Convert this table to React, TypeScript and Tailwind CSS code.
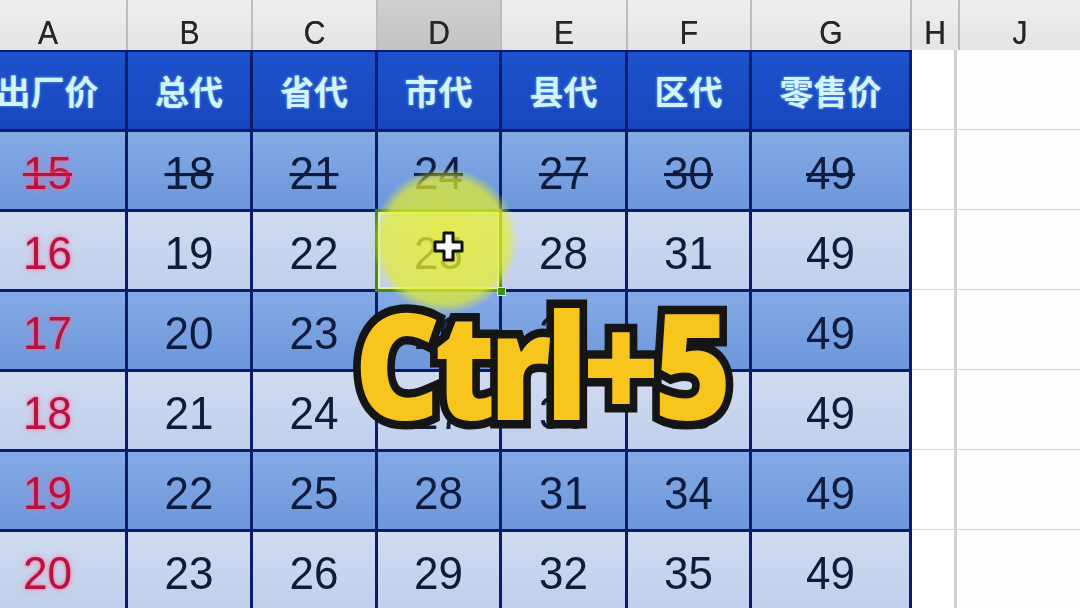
import React from "react";

const rows: number[][] = [
  [15, 18, 21, 24, 27, 30, 49],
  [16, 19, 22, 25, 28, 31, 49],
  [17, 20, 23, 26, 29, 32, 49],
  [18, 21, 24, 27, 30, 33, 49],
  [19, 22, 25, 28, 31, 34, 49],
  [20, 23, 26, 29, 32, 35, 49],
];

const headers = ["出厂价", "总代", "省代", "市代", "县代", "区代", "零售价"];
const letters = ["A", "B", "C", "D", "E", "F", "G", "H", "J"];

function Cursor() {
  return (
    <svg width="32" height="32" viewBox="0 0 32 32" className="absolute left-[433px] top-[231px] z-30">
      <path
        d="M11 2 H20 V11 H29 V20 H20 V29 H11 V20 H2 V11 H11 Z"
        fill="#ffffff"
        stroke="#111111"
        strokeWidth="3"
        strokeLinejoin="round"
      />
    </svg>
  );
}

export default function App() {
  return (
    <div className="relative w-[1080px] h-[608px] overflow-hidden bg-white [font-family:'Liberation_Sans',Arial,sans-serif]">
      {/* column letters */}
      <div className="ml-[-30px] grid grid-cols-[156px_123px_123px_122px_124px_122px_158px_46px_1fr] gap-x-[2px] bg-[#bdbdbd] h-[50px]">
        {letters.map((l, i) => (
          <div
            key={l}
            className={
              "flex items-center justify-center pt-[10px] text-[30px] text-[#262626] [text-shadow:0_0_0.6px_#262626] " +
              (i === 3
                ? "bg-gradient-to-b from-[#cfcfcf] to-[#c2c2c2]"
                : "bg-gradient-to-b from-[#eeeeee] to-[#e3e3e3]")
            }
          >
            <span className="scale-y-110 inline-block">{l}</span>
          </div>
        ))}
      </div>

      {/* table area */}
      <div className="ml-[-30px] flex">
        <div className="grid grid-cols-[155px_122px_122px_121px_123px_121px_157px] auto-rows-[77px] gap-[3px] bg-[#0b1c6c] pt-[2px] pr-[3px]">
          {headers.map((h) => (
            <div
              key={h}
              className="flex items-center justify-center bg-gradient-to-b from-[#1d52cc] to-[#1846bd] text-[34px] font-bold text-[#d2f4ff] [font-family:'Noto_Sans_CJK_SC',sans-serif] [text-shadow:0_0_3px_rgba(160,230,255,0.6)]"
            >
              {h}
            </div>
          ))}
          {rows.map((r, ri) =>
            r.map((v, ci) => {
              const dark = ri % 2 === 0;
              const selected = ri === 1 && ci === 3;
              const bg = dark
                ? "bg-gradient-to-b from-[#84aae6] to-[#6d97dc]"
                : "bg-gradient-to-b from-[#d0dbf1] to-[#c1cfeb]";
              const color =
                ci === 0
                  ? "text-[#b8123f] [text-shadow:0_0_3px_rgba(255,90,140,0.9),0_0_7px_rgba(255,120,160,0.5)]"
                  : "text-[#0f1b3d]";
              return (
                <div
                  key={ri + "-" + ci}
                  className={
                    "relative flex items-center justify-center pt-[5px] " +
                    bg +
                    (selected
                      ? " z-10 outline-[3px] outline-solid outline-[#3f8c20] shadow-[inset_0_0_0_2px_#eef7a8]"
                      : "")
                  }
                >
                  <span
                    className={
                      "inline-block scale-y-105 text-[44px] leading-none " +
                      color +
                      (ri === 0 ? " line-through decoration-[3px]" : "")
                    }
                  >
                    {v}
                  </span>
                  {selected && (
                    <div className="absolute right-[-7px] bottom-[-7px] w-[9px] h-[9px] bg-[#3f8c20] border border-[#d8f0b0]" />
                  )}
                </div>
              );
            })
          )}
        </div>

        {/* H / J columns */}
        <div className="flex-1 flex flex-col">
          {[0, 1, 2, 3, 4, 5, 6, 7].map((i) => (
            <div key={i} className="h-[80px] flex border-b border-[#d4d4d4] shrink-0">
              <div className="w-[45px] border-r-[3px] border-[#d2d2d2] bg-white" />
              <div className="flex-1 bg-[#fdfdfd]" />
            </div>
          ))}
        </div>
      </div>

      {/* yellow cursor highlight */}
      <div className="absolute left-[372px] top-[168px] w-[146px] h-[146px] rounded-full z-20 bg-[radial-gradient(circle,rgba(232,240,40,0.8)_0%,rgba(228,238,45,0.7)_60%,rgba(228,238,45,0)_71%)]" />

      <Cursor />

      {/* Ctrl+5 */}
      <div className="absolute left-[354px] top-[289px] z-40 origin-left scale-x-90 text-[148px] leading-none font-extrabold tracking-[-7px] text-[#f7c51b] [font-family:'Open_Sans',sans-serif] [-webkit-text-stroke:17px_#151515] [paint-order:stroke_fill] whitespace-nowrap">
        Ctrl+5
      </div>
    </div>
  );
}
